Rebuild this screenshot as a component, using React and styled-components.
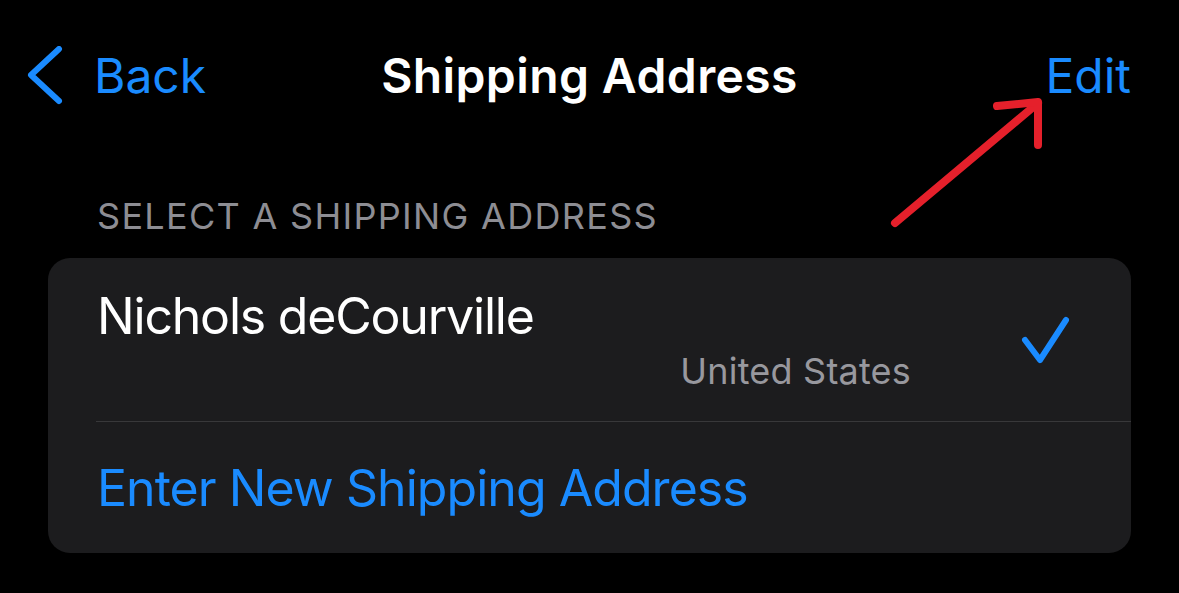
import React from "react";
import styled, { createGlobalStyle } from "styled-components";

const GlobalStyle = createGlobalStyle`
  html, body {
    margin: 0;
    padding: 0;
    background: #000;
  }
  body {
    font-family: Inter, "Noto Sans", sans-serif;
    -webkit-font-smoothing: antialiased;
  }
`;

const BLUE = "#1a8bff";

const Screen = styled.div`
  position: relative;
  width: 1179px;
  height: 593px;
  overflow: hidden;
  background: #000;
  padding: 0 48px;
  box-sizing: border-box;
`;

const NavBar = styled.header`
  height: 151px;
  display: grid;
  grid-template-columns: 1fr auto 1fr;
  align-items: center;
`;

const NavButton = styled.button`
  justify-self: ${(p) => (p.$end ? "end" : "start")};
  display: flex;
  align-items: center;
  gap: 28px;
  padding: 0;
  border: 0;
  background: none;
  color: ${BLUE};
  font: 400 48px/1 Inter, sans-serif;
  cursor: pointer;
`;

const BackButton = styled(NavButton)`
  margin-left: -22px;
`;

const Title = styled.h1`
  margin: 0;
  color: #fff;
  font: 600 48px/1 Inter, sans-serif;
  letter-spacing: 0.4px;
`;

const SectionHeader = styled.h2`
  margin: 47px 0 24px 49px;
  color: #8d8d93;
  font: 400 36px/36px Inter, sans-serif;
  letter-spacing: 1.3px;
  text-transform: uppercase;
`;

const Card = styled.section`
  background: #1c1c1e;
  border-radius: 22px;
  overflow: hidden;
`;

const AddressRow = styled.div`
  height: 163px;
  display: flex;
  align-items: center;
  padding: 0 61px 0 49px;
`;

const AddressText = styled.div`
  flex: 1;
  display: flex;
  flex-direction: column;
`;

const Name = styled.div`
  color: #fff;
  font: 400 50px/1 Inter, sans-serif;
  letter-spacing: -1.2px;
`;

const Country = styled.div`
  align-self: flex-end;
  margin-top: 12px;
  margin-right: 107px;
  color: #98989e;
  font: 400 36px/1 Inter, sans-serif;
  letter-spacing: 0.2px;
`;

const Divider = styled.div`
  height: 1px;
  margin-left: 48px;
  background: #38383a;
`;

const ActionRow = styled.button`
  width: 100%;
  height: 131px;
  display: flex;
  align-items: center;
  padding: 0 0 0 49px;
  border: 0;
  background: none;
  color: ${BLUE};
  font: 400 50px/1 Inter, sans-serif;
  letter-spacing: -0.95px;
  text-align: left;
  cursor: pointer;
`;

const Annotation = styled.svg`
  position: absolute;
  left: 880px;
  top: 90px;
  pointer-events: none;
`;

function Chevron() {
  return (
    <svg width="40" height="60" viewBox="0 0 40 60" fill="none">
      <path
        d="M33 3 L5 29 L33 55"
        stroke={BLUE}
        strokeWidth="6"
        strokeLinecap="round"
        strokeLinejoin="round"
      />
    </svg>
  );
}

function Checkmark() {
  return (
    <svg width="52" height="48" viewBox="0 0 52 48" fill="none">
      <path
        d="M7 24 L22 44 L48 4"
        stroke={BLUE}
        strokeWidth="6"
        strokeLinecap="round"
        strokeLinejoin="round"
      />
    </svg>
  );
}

export default function App() {
  return (
    <>
      <GlobalStyle />
      <Screen>
        <NavBar>
          <BackButton>
            <Chevron />
            Back
          </BackButton>
          <Title>Shipping Address</Title>
          <NavButton $end>Edit</NavButton>
        </NavBar>

        <SectionHeader>Select a Shipping Address</SectionHeader>

        <Card>
          <AddressRow>
            <AddressText>
              <Name>Nichols deCourville</Name>
              <Country>United States</Country>
            </AddressText>
            <Checkmark />
          </AddressRow>
          <Divider />
          <ActionRow>Enter New Shipping Address</ActionRow>
        </Card>

        <Annotation width="170" height="145" viewBox="0 0 170 145">
          <g
            stroke="#e5202b"
            strokeWidth="8"
            strokeLinecap="round"
            strokeLinejoin="round"
            fill="none"
          >
            <path d="M15 133 L158 13" />
            <path d="M117 16 L158 12 L158 55" />
          </g>
        </Annotation>
      </Screen>
    </>
  );
}
